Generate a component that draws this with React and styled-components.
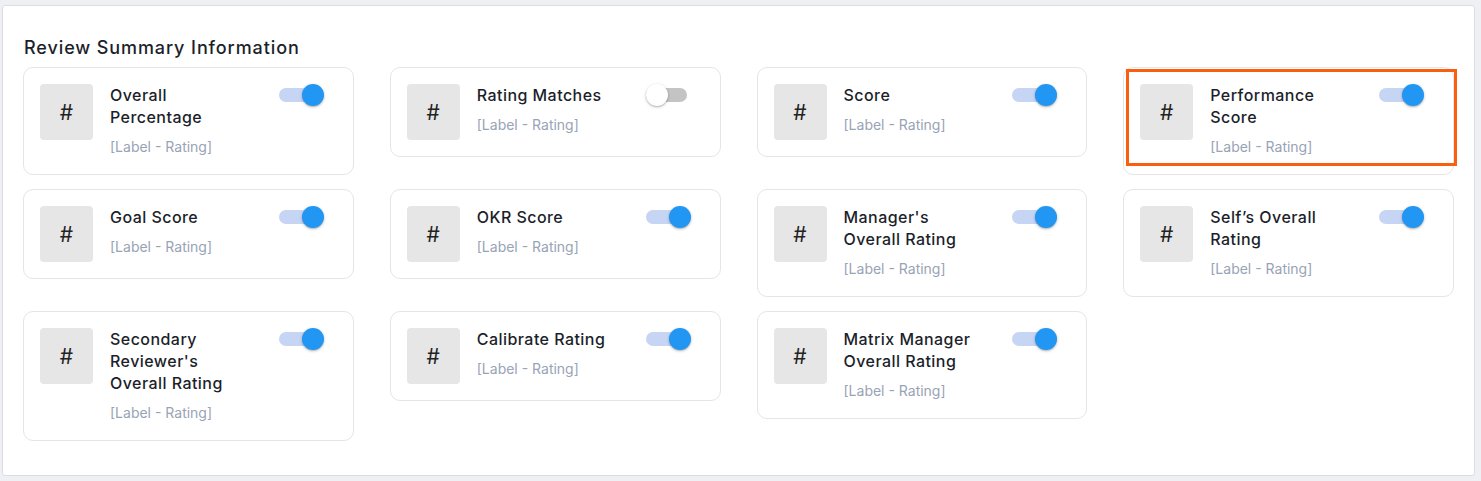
import React from "react";
import styled, { createGlobalStyle } from "styled-components";

const Global = createGlobalStyle`
  html, body { margin: 0; padding: 0; }
  body {
    background: #eff0f4;
    font-family: Inter, "Noto Sans", sans-serif;
    color: #1f2230;
  }
`;

const Page = styled.div`
  padding: 5px 6px 5px 2px;
`;

const Panel = styled.section`
  background: #ffffff;
  border: 1px solid #dcdde2;
  border-radius: 3px;
  padding: 30px 20px 34px 20px;
`;

const Heading = styled.h2`
  margin: 0 0 7px 1px;
  font-size: 18px;
  line-height: 24px;
  font-weight: 500;
  letter-spacing: 0.9px;
  color: #1c1f2b;
`;

const Grid = styled.div`
  display: grid;
  grid-template-columns: repeat(4, 1fr);
  column-gap: 36px;
  row-gap: 14px;
  align-items: start;
`;

const Card = styled.div`
  position: relative;
  display: flex;
  align-items: flex-start;
  padding: 16px;
  border: 1px solid #e4e5e9;
  border-radius: 10px;
  background: #fff;
`;

const IconBox = styled.div`
  flex: 0 0 auto;
  width: 53px;
  height: 56px;
  border-radius: 4px;
  background: #e6e6e6;
  display: flex;
  align-items: center;
  justify-content: center;
  font-size: 21px;
  color: #222;
`;

const Text = styled.div`
  flex: 1 1 auto;
  margin-left: 17px;
`;

const Title = styled.div`
  max-width: 140px;
  font-size: 16px;
  line-height: 22px;
  font-weight: 500;
  letter-spacing: 0.45px;
  color: #1c1f2b;
`;

const Sub = styled.div`
  margin-top: 8px;
  font-size: 14px;
  line-height: 22px;
  color: #98a3b6;
`;

const Switch = styled.div`
  position: relative;
  flex: 0 0 auto;
  width: 45px;
  height: 22px;
  margin-right: 13px;
`;

const Track = styled.div`
  position: absolute;
  left: 0;
  top: 4px;
  width: 41px;
  height: 14px;
  border-radius: 7px;
  background: ${(p) => (p.$on ? "#c6d5f4" : "#c4c4c4")};
`;

const Thumb = styled.div`
  position: absolute;
  top: 0;
  left: ${(p) => (p.$on ? "23px" : "0")};
  width: 22px;
  height: 22px;
  border-radius: 50%;
  background: ${(p) => (p.$on ? "#2196f3" : "#ffffff")};
  box-shadow: 0 1px 3px rgba(0, 0, 0, 0.25), 0 1px 1px rgba(0, 0, 0, 0.1);
`;

const Highlight = styled.div`
  position: absolute;
  left: 2px;
  top: 1px;
  width: 331px;
  height: 97px;
  box-sizing: border-box;
  border: 3px solid #fa5f0f;
  pointer-events: none;
`;

const items = [
  { title: "Overall Percentage", on: true },
  { title: "Rating Matches", on: false },
  { title: "Score", on: true },
  { title: "Performance Score", on: true, highlight: true },
  { title: "Goal Score", on: true },
  { title: "OKR Score", on: true },
  { title: "Manager's Overall Rating", on: true },
  { title: "Self’s Overall Rating", on: true },
  { title: "Secondary Reviewer's Overall Rating", on: true },
  { title: "Calibrate Rating", on: true },
  { title: "Matrix Manager Overall Rating", on: true },
];

export default function App() {
  return (
    <>
      <Global />
      <Page>
        <Panel>
          <Heading>Review Summary Information</Heading>
          <Grid>
            {items.map((it) => (
              <Card key={it.title}>
                <IconBox>#</IconBox>
                <Text>
                  <Title>{it.title}</Title>
                  <Sub>[Label - Rating]</Sub>
                </Text>
                <Switch>
                  <Track $on={it.on} />
                  <Thumb $on={it.on} />
                </Switch>
                {it.highlight && <Highlight />}
              </Card>
            ))}
          </Grid>
        </Panel>
      </Page>
    </>
  );
}
